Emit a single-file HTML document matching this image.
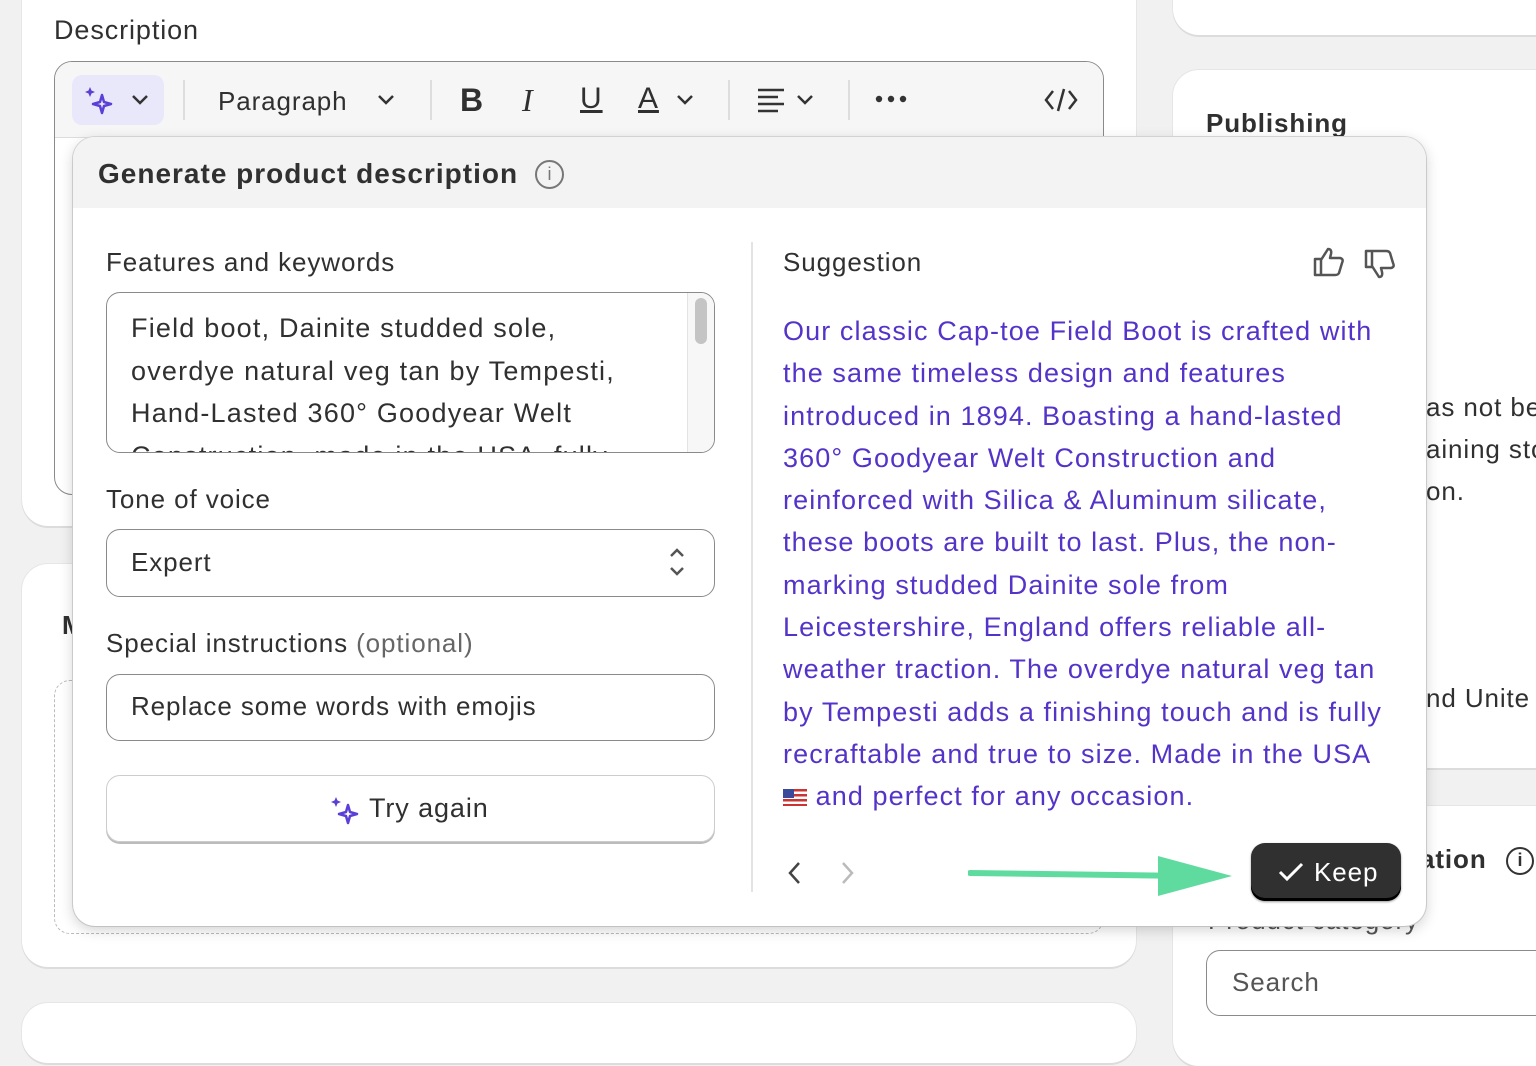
<!DOCTYPE html>
<html><head><meta charset="utf-8"><style>
*{box-sizing:border-box;margin:0;padding:0}
body{width:1536px;height:1016px;overflow:hidden;background:#f1f1f1;font-family:"Liberation Sans",sans-serif;color:#303030;position:relative;letter-spacing:0.9px}
.abs{position:absolute}
.card{position:absolute;background:#fff;border-radius:26px;box-shadow:0 2px 0 #dcdcdc,0 0 0 1px #e6e6e6}
.t{position:absolute;font-size:26px;white-space:nowrap}
.input{position:absolute;border:1.5px solid #8a8a8a;border-radius:14px;background:#fff}
.sug{position:absolute;left:783px;top:310px;width:640px;font-size:27px;line-height:42.3px;color:#5433c8;letter-spacing:1.1px;white-space:nowrap}
</style></head><body>
<div class="card" style="left:22px;top:-30px;width:1114px;height:556px"></div>
<div class="t" style="left:54px;top:15px;font-size:27px">Description</div>
<div class="abs" style="left:54px;top:61px;width:1050px;height:434px;border:1.5px solid #8a8a8a;border-radius:18px;background:#fff;overflow:hidden">
 <div class="abs" style="left:0;top:0;width:100%;height:76px;background:#f6f6f6;border-bottom:1px solid #ddd"></div>
</div>
<div class="abs" style="left:72px;top:75px;width:92px;height:50px;background:#e9e8fb;border-radius:10px"></div>
<svg class="abs" style="left:84px;top:85px" width="32" height="32" viewBox="0 0 32 32"><path d="M18 10 L20 17 L27 19 L20 21 L18 28 L16 21 L9 19 L16 17Z" fill="none" stroke="#5b3fd6" stroke-width="2.5" stroke-linejoin="round"/><path d="M6 2 L7.5 5.5 L11 7 L7.5 8.5 L6 12 L4.5 8.5 L1 7 L4.5 5.5Z" fill="#5b3fd6"/></svg>
<svg class="abs" style="left:130px;top:93px" width="20" height="14"><path d="M3 3 L10 10 L17 3" fill="none" stroke="#333" stroke-width="2.5"/></svg>
<div class="abs" style="left:183px;top:80px;width:2px;height:40px;background:#ddd"></div>
<div class="t" style="left:218px;top:86px">Paragraph</div>
<svg class="abs" style="left:376px;top:93px" width="20" height="14"><path d="M3 3 L10 10 L17 3" fill="none" stroke="#333" stroke-width="2.5"/></svg>
<div class="abs" style="left:430px;top:80px;width:2px;height:40px;background:#ddd"></div>
<div class="t" style="left:460px;top:82px;font-size:32px;font-weight:bold">B</div>
<div class="t" style="left:522px;top:82px;font-size:32px;font-style:italic;font-family:'Liberation Serif'">I</div>
<div class="t" style="left:580px;top:82px;font-size:30px;text-decoration:underline">U</div>
<div class="t" style="left:638px;top:82px;font-size:30px;text-decoration:underline">A</div>
<svg class="abs" style="left:675px;top:93px" width="20" height="14"><path d="M3 3 L10 10 L17 3" fill="none" stroke="#333" stroke-width="2.5"/></svg>
<div class="abs" style="left:728px;top:80px;width:2px;height:40px;background:#ddd"></div>
<svg class="abs" style="left:756px;top:86px" width="32" height="28"><path d="M2 4 H28 M2 11 H22 M2 18 H28 M2 25 H22" stroke="#333" stroke-width="2.5"/></svg>
<svg class="abs" style="left:795px;top:93px" width="20" height="14"><path d="M3 3 L10 10 L17 3" fill="none" stroke="#333" stroke-width="2.5"/></svg>
<div class="abs" style="left:848px;top:80px;width:2px;height:40px;background:#ddd"></div>
<svg class="abs" style="left:875px;top:94px" width="34" height="10"><circle cx="4" cy="5" r="3.2" fill="#333"/><circle cx="16" cy="5" r="3.2" fill="#333"/><circle cx="28" cy="5" r="3.2" fill="#333"/></svg>
<svg class="abs" style="left:1043px;top:86px" width="36" height="28"><path d="M10 5 L3 14 L10 23 M26 5 L33 14 L26 23 M21 3 L15 25" fill="none" stroke="#333" stroke-width="2.5"/></svg>
<div class="card" style="left:22px;top:564px;width:1114px;height:403px"></div>
<div class="t" style="left:62px;top:610px;font-weight:bold">M</div>
<div class="abs" style="left:54px;top:680px;width:1050px;height:254px;border:1.5px dashed #bbb;border-radius:16px"></div>
<div class="card" style="left:22px;top:1003px;width:1114px;height:60px"></div>
<div class="card" style="left:1173px;top:-30px;width:400px;height:65px"></div>
<div class="card" style="left:1173px;top:70px;width:400px;height:698px"></div>
<div class="t" style="left:1206px;top:108px;font-weight:bold">Publishing</div>
<div class="t" style="left:1426px;top:392px">as not be</div>
<div class="t" style="left:1426px;top:434px">aining sto</div>
<div class="t" style="left:1426px;top:476px">on.</div>
<div class="t" style="left:1426px;top:683px">nd Unite</div>
<div class="card" style="left:1173px;top:806px;width:400px;height:260px"></div>
<div class="t" style="left:1420px;top:844px;font-weight:bold">ation</div>
<div class="abs" style="left:1506px;top:847px;width:28px;height:28px;border:2.5px solid #333;border-radius:50%;font-size:18px;text-align:center;line-height:23px;font-weight:bold;letter-spacing:0">i</div>
<div class="t" style="left:1208px;top:905px;color:#555">Product category</div>
<div class="input" style="left:1206px;top:950px;width:360px;height:66px"></div>
<div class="t" style="left:1232px;top:967px;color:#555">Search</div>
<div class="abs" style="left:73px;top:137px;width:1353px;height:789px;background:#fff;border-radius:22px;box-shadow:0 4px 14px rgba(0,0,0,.18),0 0 0 1px #ddd;overflow:hidden">
 <div class="abs" style="left:0;top:0;width:100%;height:71px;background:#f3f3f3"></div>
</div>
<div class="t" style="left:98px;top:158px;font-size:28px;font-weight:bold;letter-spacing:1px">Generate product description</div>
<div class="abs" style="left:535px;top:160px;width:29px;height:29px;border:2px solid #777;border-radius:50%;font-size:18px;text-align:center;line-height:25px;color:#777;letter-spacing:0">i</div>
<div class="abs" style="left:751px;top:242px;width:2px;height:650px;background:#e3e3e3"></div>
<div class="t" style="left:106px;top:247px">Features and keywords</div>
<div class="input" style="left:106px;top:292px;width:609px;height:161px;overflow:hidden">
 <div style="position:absolute;left:24px;top:14px;font-size:27px;line-height:42.5px;white-space:nowrap;letter-spacing:1.2px">Field boot, Dainite studded sole,<br>overdye natural veg tan by Tempesti,<br>Hand-Lasted 360° Goodyear Welt<br>Construction, made in the USA, fully</div>
 <div style="position:absolute;right:0;top:0;width:27px;height:100%;background:#f7f7f7;border-left:1px solid #e3e3e3"></div>
 <div style="position:absolute;right:7px;top:5px;width:12px;height:46px;background:#c4c4c4;border-radius:6px"></div>
</div>
<div class="t" style="left:106px;top:484px">Tone of voice</div>
<div class="input" style="left:106px;top:529px;width:609px;height:68px"></div>
<div class="t" style="left:131px;top:547px">Expert</div>
<svg class="abs" style="left:666px;top:546px" width="22" height="32"><path d="M5 10 L11 4 L17 10 M5 22 L11 28 L17 22" fill="none" stroke="#555" stroke-width="2.5"/></svg>
<div class="t" style="left:106px;top:628px">Special instructions <span style="color:#666">(optional)</span></div>
<div class="input" style="left:106px;top:674px;width:609px;height:67px"></div>
<div class="t" style="left:131px;top:691px">Replace some words with emojis</div>
<div class="abs" style="left:106px;top:775px;width:609px;height:67px;border:1.5px solid #ccc;border-radius:14px;box-shadow:0 2px 0 #bbb"></div>
<svg class="abs" style="left:330px;top:795px" width="32" height="32" viewBox="0 0 32 32"><path d="M18 10 L20 17 L27 19 L20 21 L18 28 L16 21 L9 19 L16 17Z" fill="none" stroke="#5b3fd6" stroke-width="2.5" stroke-linejoin="round"/><path d="M6 2 L7.5 5.5 L11 7 L7.5 8.5 L6 12 L4.5 8.5 L1 7 L4.5 5.5Z" fill="#5b3fd6"/></svg>
<div class="t" style="left:369px;top:793px;font-size:27px">Try again</div>
<div class="t" style="left:783px;top:247px">Suggestion</div>
<svg class="abs" style="left:1312px;top:245px" width="34" height="34" viewBox="0 0 34 34"><path d="M3 14 H9 V30 H3Z M9 15 L16 4 Q20 4 19 9 L18 13 H28 Q32 14 30 18 L27 28 Q26 30 23 30 H9" fill="none" stroke="#555" stroke-width="2.5" stroke-linejoin="round"/></svg>
<svg class="abs" style="left:1363px;top:247px" width="34" height="34" viewBox="0 0 34 34"><g transform="translate(34,34) rotate(180)"><path d="M3 14 H9 V30 H3Z M9 15 L16 4 Q20 4 19 9 L18 13 H28 Q32 14 30 18 L27 28 Q26 30 23 30 H9" fill="none" stroke="#555" stroke-width="2.5" stroke-linejoin="round" transform="translate(34,0) scale(-1,1)"/></g></svg>
<div class="sug">Our classic Cap-toe Field Boot is crafted with<br>the same timeless design and features<br>introduced in 1894. Boasting a hand-lasted<br>360° Goodyear Welt Construction and<br>reinforced with Silica &amp; Aluminum silicate,<br>these boots are built to last. Plus, the non-<br>marking studded Dainite sole from<br>Leicestershire, England offers reliable all-<br>weather traction. The overdye natural veg tan<br>by Tempesti adds a finishing touch and is fully<br>recraftable and true to size. Made in the USA<br><span style="display:inline-block;width:24px;height:17px;background:repeating-linear-gradient(#c33 0 2.5px,#fff 2.5px 5px);position:relative;vertical-align:-1px"><span style="position:absolute;left:0;top:0;width:11px;height:9px;background:#3a4a9a"></span></span> and perfect for any occasion.</div>
<svg class="abs" style="left:785px;top:860px" width="20" height="26"><path d="M14 3 L5 13 L14 23" fill="none" stroke="#444" stroke-width="2.5"/></svg>
<svg class="abs" style="left:837px;top:860px" width="20" height="26"><path d="M6 3 L15 13 L6 23" fill="none" stroke="#bbb" stroke-width="2.5"/></svg>
<svg class="abs" style="left:968px;top:852px" width="266" height="46"><path d="M2 21 L224 24" stroke="#5fdba0" stroke-width="6" stroke-linecap="round"/><path d="M190 4 L264 24 L190 44Z" fill="#5fdba0"/></svg>
<div class="abs" style="left:1251px;top:843px;width:150px;height:58px;background:#303030;border-radius:14px;box-shadow:inset 0 -3px 0 #000,0 1px 2px rgba(0,0,0,.4)"></div>
<svg class="abs" style="left:1277px;top:860px" width="28" height="24"><path d="M3 12 L10 19 L25 4" fill="none" stroke="#fff" stroke-width="3"/></svg>
<div class="t" style="left:1314px;top:857px;color:#fff;font-size:26px">Keep</div>
</body></html>
